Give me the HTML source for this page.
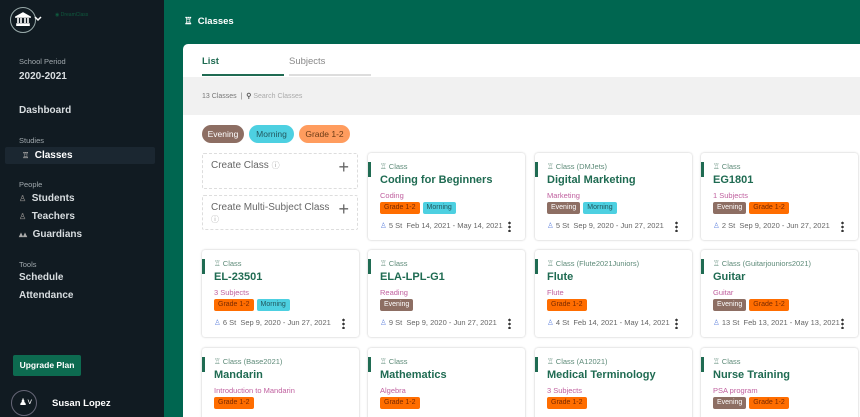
<!DOCTYPE html>
<html><head><meta charset="utf-8"><style>
*{margin:0;padding:0;box-sizing:border-box}
html,body{width:860px;height:417px;overflow:hidden}
body{font-family:"Liberation Sans",sans-serif;background:#006650;position:relative}
.sb{position:absolute;left:0;top:0;width:164px;height:417px;background:#111b22;color:#d8dde0}
.a{position:absolute;white-space:nowrap}
.lbl{font-size:7.5px;color:#a0a8ad}
.nav{font-size:10px;font-weight:bold;color:#d8dde0}
.panel{position:absolute;left:183px;top:44px;width:700px;height:373px;background:#fff;border-radius:5px 0 0 0}
.card{position:absolute;width:157px;height:87px;background:#fff;border-radius:3px;box-shadow:0 0 2px rgba(0,0,0,.25)}
.card .bar{position:absolute;left:0;top:9px;width:3px;height:15px;background:#1f6b52}
.card .c{position:absolute;left:12px;top:9px;font-size:7.5px;color:#5d8a78;white-space:nowrap}
.card .t{position:absolute;left:12px;top:21px;font-size:11px;color:#1f6b52;font-weight:bold;white-space:nowrap}
.card .s{position:absolute;left:12px;top:38px;font-size:7.5px;color:#c0609f;white-space:nowrap}
.card .tg{position:absolute;left:12px;top:49px;display:flex;gap:3px}
.tag{font-size:7px;padding:2px 4px;border-radius:2px;height:12px;line-height:8px}
.ev{background:#8d6e63;color:#fff}.mo{background:#4dd0e1;color:#22575e}.gr{background:#ff6d00;color:#7a2a00}
.card .f{position:absolute;left:12px;top:68px;font-size:7.5px;color:#666;white-space:nowrap}
.card .f b{color:#6f8ee0;font-weight:normal}
.dots{position:absolute;right:14px;top:68px;width:3px;height:11px;background:radial-gradient(circle,#333 1.2px,transparent 1.4px) 0 0/3px 4px}
.cr{position:absolute;left:202px;width:156px;border:1px dashed #ddd;border-radius:2px;font-size:10px;color:#666}
.chip{position:absolute;top:125px;height:18px;border-radius:9px;font-size:8.5px;line-height:18px;text-align:center}
</style></head><body>
<div class="sb">
  <div class="a" style="left:10px;top:7px;width:26px;height:26px;border:1px solid #9aa;border-radius:50%"></div>
  <svg class="a" style="left:15px;top:12px" width="16" height="14" viewBox="0 0 16 14"><path d="M1 5L8 1L15 5ZM2 12H14V13.5H2ZM3 6V11M6 6V11M10 6V11M13 6V11" stroke="#fff" stroke-width="1.6" fill="#fff"/></svg>
  <svg class="a" style="left:34px;top:16px" width="8" height="6"><path d="M1 1L4 4L7 1" stroke="#fff" stroke-width="1.5" fill="none"/></svg>
  <div class="a" style="left:55px;top:12px;font-size:5px;color:#0f5a3e">◉ DreamClass</div>
  <div class="a lbl" style="left:19px;top:57px">School Period</div>
  <div class="a nav" style="left:19px;top:71px">2020-2021</div>
  <div class="a nav" style="left:19px;top:105px">Dashboard</div>
  <div class="a lbl" style="left:19px;top:136px">Studies</div>
  <div class="a" style="left:5px;top:147px;width:150px;height:17px;background:#1b2731;border-radius:2px"></div>
  <div class="a nav" style="left:22px;top:150px;color:#fff"><span style="font-size:8px;color:#999">♖</span>&nbsp; Classes</div>
  <div class="a lbl" style="left:19px;top:180px">People</div>
  <div class="a nav" style="left:19px;top:193px"><span style="color:#777;font-size:8px">♙</span>&nbsp; Students</div>
  <div class="a nav" style="left:19px;top:211px"><span style="color:#777;font-size:8px">♙</span>&nbsp; Teachers</div>
  <div class="a nav" style="left:19px;top:229px"><span style="color:#aaa;font-size:8px">▴▴</span>&nbsp; Guardians</div>
  <div class="a lbl" style="left:19px;top:260px">Tools</div>
  <div class="a nav" style="left:19px;top:272px">Schedule</div>
  <div class="a nav" style="left:19px;top:290px">Attendance</div>
  <div class="a" style="left:13px;top:355px;width:68px;height:21px;background:#0d6b50;border-radius:2px;color:#fff;font-size:8.5px;font-weight:bold;text-align:center;line-height:21px">Upgrade Plan</div>
  <div class="a" style="left:11px;top:390px;width:26px;height:26px;border:1px solid #667;border-radius:50%"></div>
  <div class="a" style="left:19px;top:397px;color:#fff;font-size:9px">♟˅</div>
  <div class="a nav" style="left:52px;top:398px;font-size:9.5px;color:#fff">Susan Lopez</div>
</div>
<div class="a" style="left:184px;top:16px;color:#fff;font-size:9.5px;font-weight:bold">♖&nbsp; Classes</div>
<div class="panel"></div>
<div class="a" style="left:202px;top:56px;font-size:9.5px;color:#1f6b52;font-weight:bold">List</div>
<div class="a" style="left:289px;top:56px;font-size:9.5px;color:#888">Subjects</div>
<div class="a" style="left:202px;top:74px;width:82px;height:2px;background:#1f6b52"></div>
<div class="a" style="left:289px;top:74px;width:82px;height:2px;background:#ddd"></div>
<div class="a" style="left:183px;top:77px;width:677px;height:38px;background:#f1f1f1"></div>
<div class="a" style="left:202px;top:92px;font-size:7px;color:#777">13 Classes &nbsp;| &nbsp;<b style="color:#555">⚲</b> <span style="color:#aaa">Search Classes</span></div>
<div class="chip ev" style="left:202px;width:42px">Evening</div>
<div class="chip mo" style="left:249px;width:45px">Morning</div>
<div class="chip" style="left:299px;width:51px;background:#ff9c5e;color:#6a3a15">Grade 1-2</div>
<div class="cr" style="top:153px;height:36px"><span class="a" style="left:8px;top:6px">Create Class <span style="color:#aaa;font-size:8px">ⓘ</span></span><span class="a" style="right:8px;top:3px;font-size:18px;color:#666">+</span></div>
<div class="cr" style="top:195px;height:35px"><span class="a" style="left:8px;top:6px">Create Multi-Subject Class</span><span class="a" style="left:8px;top:18px;color:#aaa;font-size:8px">ⓘ</span><span class="a" style="right:8px;top:3px;font-size:18px;color:#666">+</span></div>

<div class="card" style="left:368px;top:153px"><div class="bar"></div><div class="c">♖ Class</div><div class="t">Coding for Beginners</div><div class="s">Coding</div><div class="tg"><span class="tag gr">Grade 1-2</span><span class="tag mo">Morning</span></div><div class="f"><b>♙</b> 5 St &nbsp;Feb 14, 2021 - May 14, 2021</div><div class="dots"></div></div>
<div class="card" style="left:535px;top:153px"><div class="bar"></div><div class="c">♖ Class (DMJets)</div><div class="t">Digital Marketing</div><div class="s">Marketing</div><div class="tg"><span class="tag ev">Evening</span><span class="tag mo">Morning</span></div><div class="f"><b>♙</b> 5 St &nbsp;Sep 9, 2020 - Jun 27, 2021</div><div class="dots"></div></div>
<div class="card" style="left:701px;top:153px"><div class="bar"></div><div class="c">♖ Class</div><div class="t">EG1801</div><div class="s">1 Subjects</div><div class="tg"><span class="tag ev">Evening</span><span class="tag gr">Grade 1-2</span></div><div class="f"><b>♙</b> 2 St &nbsp;Sep 9, 2020 - Jun 27, 2021</div><div class="dots"></div></div>

<div class="card" style="left:202px;top:250px"><div class="bar"></div><div class="c">♖ Class</div><div class="t">EL-23501</div><div class="s">3 Subjects</div><div class="tg"><span class="tag gr">Grade 1-2</span><span class="tag mo">Morning</span></div><div class="f"><b>♙</b> 6 St &nbsp;Sep 9, 2020 - Jun 27, 2021</div><div class="dots"></div></div>
<div class="card" style="left:368px;top:250px"><div class="bar"></div><div class="c">♖ Class</div><div class="t">ELA-LPL-G1</div><div class="s">Reading</div><div class="tg"><span class="tag ev">Evening</span></div><div class="f"><b>♙</b> 9 St &nbsp;Sep 9, 2020 - Jun 27, 2021</div><div class="dots"></div></div>
<div class="card" style="left:535px;top:250px"><div class="bar"></div><div class="c">♖ Class (Flute2021Juniors)</div><div class="t">Flute</div><div class="s">Flute</div><div class="tg"><span class="tag gr">Grade 1-2</span></div><div class="f"><b>♙</b> 4 St &nbsp;Feb 14, 2021 - May 14, 2021</div><div class="dots"></div></div>
<div class="card" style="left:701px;top:250px"><div class="bar"></div><div class="c">♖ Class (Guitarjouniors2021)</div><div class="t">Guitar</div><div class="s">Guitar</div><div class="tg"><span class="tag ev">Evening</span><span class="tag gr">Grade 1-2</span></div><div class="f"><b>♙</b> 13 St &nbsp;Feb 13, 2021 - May 13, 2021</div><div class="dots"></div></div>

<div class="card" style="left:202px;top:348px"><div class="bar"></div><div class="c">♖ Class (Base2021)</div><div class="t">Mandarin</div><div class="s">Introduction to Mandarin</div><div class="tg"><span class="tag gr">Grade 1-2</span></div></div>
<div class="card" style="left:368px;top:348px"><div class="bar"></div><div class="c">♖ Class</div><div class="t">Mathematics</div><div class="s">Algebra</div><div class="tg"><span class="tag gr">Grade 1-2</span></div></div>
<div class="card" style="left:535px;top:348px"><div class="bar"></div><div class="c">♖ Class (A12021)</div><div class="t">Medical Terminology</div><div class="s">3 Subjects</div><div class="tg"><span class="tag gr">Grade 1-2</span></div></div>
<div class="card" style="left:701px;top:348px"><div class="bar"></div><div class="c">♖ Class</div><div class="t">Nurse Training</div><div class="s">PSA program</div><div class="tg"><span class="tag ev">Evening</span><span class="tag gr">Grade 1-2</span></div></div>
</body></html>
